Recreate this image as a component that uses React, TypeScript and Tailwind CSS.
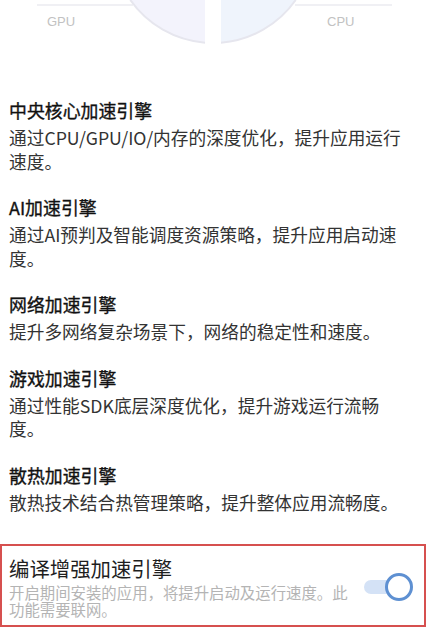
import React from "react";

const sections = [
  {
    title: "中央核心加速引擎",
    desc: "通过CPU/GPU/IO/内存的深度优化，提升应用运行速度。",
  },
  {
    title: "AI加速引擎",
    desc: "通过AI预判及智能调度资源策略，提升应用启动速度。",
  },
  {
    title: "网络加速引擎",
    desc: "提升多网络复杂场景下，网络的稳定性和速度。",
  },
  {
    title: "游戏加速引擎",
    desc: "通过性能SDK底层深度优化，提升游戏运行流畅度。",
  },
  {
    title: "散热加速引擎",
    desc: "散热技术结合热管理策略，提升整体应用流畅度。",
  },
];

function GaugeTop() {
  return (
    <svg width="426" height="50" viewBox="0 0 426 50" className="block">
      <line x1="37" y1="5" x2="133" y2="5" stroke="#ebebf0" strokeWidth="1.5" />
      <line x1="295" y1="5" x2="392" y2="5" stroke="#ebebf0" strokeWidth="1.5" />
      <path d="M130.3 0 A101 101 0 0 0 205 42.7 L205 0 Z" fill="#f3f3fc" />
      <path d="M130.3 0 A101 101 0 0 0 205 42.7" fill="none" stroke="#e6e6ee" strokeWidth="2" />
      <path d="M221 42.7 A101 101 0 0 0 295.7 0 L221 0 Z" fill="#eff4fc" />
      <path d="M221 42.7 A101 101 0 0 0 295.7 0" fill="none" stroke="#e6e6ee" strokeWidth="2" />
      <text x="47" y="26" fontSize="13" fill="#c2c2c2" fontFamily="'Liberation Sans', Arial, sans-serif">
        GPU
      </text>
      <text x="327" y="26" fontSize="13" fill="#c2c2c2" fontFamily="'Liberation Sans', Arial, sans-serif">
        CPU
      </text>
    </svg>
  );
}

function Toggle() {
  return (
    <div className="relative h-[28px] w-[49px] shrink-0">
      <div className="absolute left-0 top-[7px] h-[14px] w-[40px] rounded-full bg-[#d4e2f6]" />
      <div className="absolute right-0 top-0 h-[28px] w-[28px] rounded-full border-[3px] border-[#5e90d2] bg-white" />
    </div>
  );
}

export default function App() {
  return (
    <div
      className="h-[632px] w-[426px] overflow-hidden bg-white"
      style={{ fontFamily: "'Noto Sans CJK SC', 'Noto Sans', sans-serif" }}
    >
      <GaugeTop />

      <div className="flex flex-col gap-[22px] pl-[9px] pr-[20px] pt-[48px]">
        {sections.map((s) => (
          <div key={s.title}>
            <div className="text-[17.9px] leading-[24px] text-[#111] [-webkit-text-stroke:0.35px_#111]">
              {s.title}
            </div>
            <div className="mt-[4px] text-[17.7px] leading-[23.5px] text-[#333]">{s.desc}</div>
          </div>
        ))}
      </div>

      <div className="mt-[30px] flex items-center border-2 border-[#d6504f] pb-[7px] pl-[7px] pr-[11px] pt-[9px]">
        <div className="w-[347px]">
          <div className="text-[20.4px] leading-[26px] text-[#1e1e1e]">编译增强加速引擎</div>
          <div className="mt-[3px] text-[15.4px] leading-[17px] text-[#b4b4b4]">
            开启期间安装的应用，将提升启动及运行速度。此功能需要联网。
          </div>
        </div>
        <div className="ml-auto">
          <Toggle />
        </div>
      </div>
    </div>
  );
}
